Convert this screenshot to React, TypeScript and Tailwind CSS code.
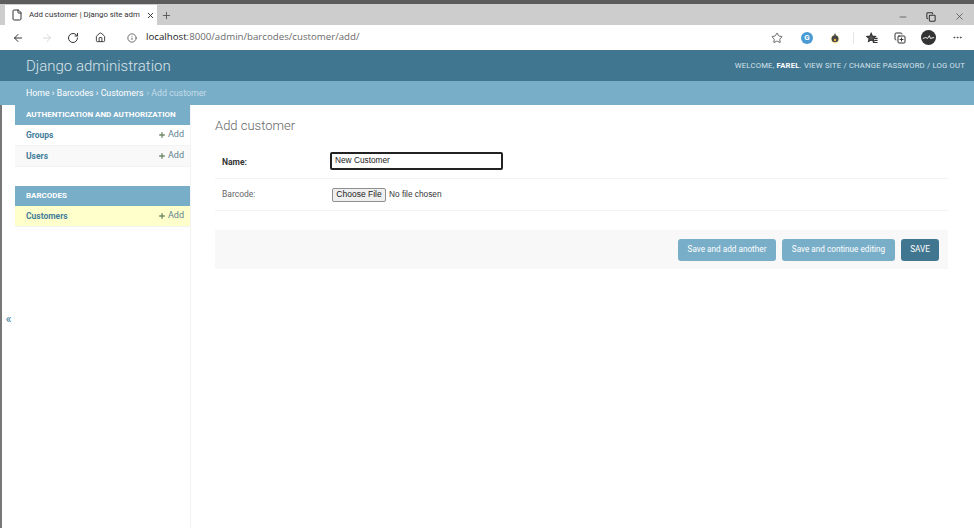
import { ArrowLeft, ArrowRight, RotateCw, Home, Info, Star, Plus, X, Minus, Copy, CopyPlus, File, MoreHorizontal } from 'lucide-react';

function AddLink() {
  return (
    <span className="flex items-center gap-[2px] text-[9px] text-[#5f7f90]">
      <Plus className="h-[8px] w-[8px] text-[#6f8a68]" strokeWidth={4} />
      Add
    </span>
  );
}

function ModelRow({ name, active, alt }: { name: string; active?: boolean; alt?: boolean }) {
  return (
    <div
      className={`flex h-[21px] items-center justify-between pl-[11px] pr-[6px] border-b border-[#f3f3f3] ${
        active ? 'bg-[#ffffcc]' : alt ? 'bg-[#f9f9f9]' : 'bg-white'
      }`}
    >
      <span className="text-[8.5px] font-bold text-[#447e9b]">{name}</span>
      <AddLink />
    </div>
  );
}

function AppHeading({ children }: { children: string }) {
  return (
    <div className="flex h-[20px] items-center bg-[#79aec8] pl-[11px] text-[8px] font-bold text-white">
      {children}
    </div>
  );
}

// Favourites button of the browser: star with list lines
function FavoritesIcon() {
  return (
    <svg viewBox="0 0 14 14" className="mr-[16px] h-[12px] w-[12px]" fill="none" stroke="#333" strokeWidth="1.3">
      <path d="M6 1.5l1.5 3.3 3.5.4-2.6 2.4.7 3.5L6 9.4l-3.1 1.7.7-3.5L1 5.2l3.5-.4z" fill="#555" />
      <path d="M9.5 7.5h4M9.5 9.8h4M8 12.2h5.5" />
    </svg>
  );
}

function FlameIcon() {
  return (
    <svg viewBox="0 0 12 14" className="mr-[13px] h-[12px] w-[10px]">
      <circle cx="6" cy="8.5" r="5.5" fill="#fff7c4" />
      <circle cx="6" cy="8" r="4.2" fill="#444" />
      <path d="M6 1l1.4 3H4.6z" fill="#444" />
      <circle cx="6" cy="9.5" r="1.5" fill="#e8b23a" />
    </svg>
  );
}

function AvatarIcon() {
  return (
    <svg viewBox="0 0 16 16" className="mr-[16px] h-[15px] w-[15px]">
      <circle cx="8" cy="8" r="8" fill="#333" />
      <path d="M2 9l3-1 2 1 2-3 1 3 4-1" fill="none" stroke="#fff" strokeWidth="1" />
    </svg>
  );
}

export default function App() {
  return (
    <div className="flex h-[528px] w-[974px] flex-col overflow-hidden bg-white font-['Roboto',sans-serif]">
      {/* Browser chrome */}
      <div className="h-[4px] shrink-0 bg-[#5c5c5c]" />
      <div className="flex h-[21px] shrink-0 items-end bg-[#cdcdcd]">
        <div className="ml-[5px] flex h-[20px] w-[152px] items-center gap-[6px] bg-white pl-[6px] pr-[6px]">
          <File className="h-[12px] w-[12px] shrink-0 text-[#333]" strokeWidth={2} />
          <span className="flex-1 whitespace-nowrap text-[7.8px] text-[#333]">
            Add customer | Django site adm
          </span>
          <X className="h-[9px] w-[9px] shrink-0 text-[#333]" strokeWidth={2.5} />
        </div>
        <Plus className="mb-[4px] ml-[4px] h-[11px] w-[11px] text-[#555]" />
        <div className="ml-auto mb-[3px] flex items-center gap-[18px] pr-[9px]">
          <Minus className="h-[10px] w-[10px] text-[#555]" />
          <Copy className="h-[10px] w-[10px] text-[#333]" strokeWidth={2.5} />
          <X className="h-[11px] w-[11px] text-[#444]" strokeWidth={1.5} />
        </div>
      </div>
      <div className="flex h-[25px] shrink-0 items-center bg-white">
        <ArrowLeft className="ml-[12px] h-[12px] w-[12px] text-[#333]" />
        <ArrowRight className="ml-[17px] h-[12px] w-[12px] text-[#d8d8d8]" />
        <RotateCw className="ml-[14px] h-[12px] w-[12px] text-[#333]" />
        <Home className="ml-[16px] h-[11px] w-[11px] text-[#333]" />
        <Info className="ml-[21px] h-[10px] w-[10px] text-[#555]" />
        <span className="ml-[9px] font-['Open_Sans',sans-serif] text-[9.7px] text-[#6b6b6b]">
          <span className="text-[#222]">localhost</span>:8000/admin/barcodes/customer/add/
        </span>
        <div className="ml-auto flex items-center pr-[11px]">
          <Star className="mr-[18px] h-[12px] w-[12px] text-[#666]" />
          <span className="mr-[17px] flex h-[12px] w-[12px] items-center justify-center rounded-full bg-[#4a9bd4] text-[8px] font-bold text-white">
            G
          </span>
          <FlameIcon />
          <span className="mr-[12px] h-[12px] w-px bg-[#e6e6e6]" />
          <FavoritesIcon />
          <CopyPlus className="mr-[15px] h-[12px] w-[12px] text-[#333]" />
          <AvatarIcon />
          <MoreHorizontal className="h-[11px] w-[11px] text-[#444]" />
        </div>
      </div>

      {/* Django header */}
      <div className="flex h-[31px] shrink-0 items-center justify-between bg-[#417690] pl-[26px] pr-[9px]">
        <span className="pt-[2px] text-[15px] font-light text-[#d9e4e9]">Django administration</span>
        <span className="pt-[1px] text-[7.7px] tracking-[0.2px] text-[#d5e4ec]">
          WELCOME, <b className="text-white">FAREL</b>. VIEW SITE / CHANGE PASSWORD / LOG OUT
        </span>
      </div>
      <div className="flex h-[24px] shrink-0 items-center bg-[#79aec8] pl-[26px] pt-[1px] text-[8.8px] text-white">
        Home › Barcodes › Customers <span className="ml-[3px] text-[#c4dce8]">› Add customer</span>
      </div>

      {/* Main */}
      <div className="flex flex-1 min-h-0">
        <div className="flex w-[15px] shrink-0 items-center justify-center border-l-2 border-[#777] pt-[4px]">
          <span className="text-[13px] text-[#447e9b]">«</span>
        </div>
        <div className="w-[176px] shrink-0 border-r border-[#f3f3f3]">
          <AppHeading>AUTHENTICATION AND AUTHORIZATION</AppHeading>
          <ModelRow name="Groups" />
          <ModelRow name="Users" alt />
          <div className="h-[19px]" />
          <AppHeading>BARCODES</AppHeading>
          <ModelRow name="Customers" active />
        </div>
        <div className="flex-1 pl-[24px] pr-[26px] pt-[13px]">
          <h1 className="text-[13px] font-light leading-[16px] text-[#666]">Add customer</h1>
          <div className="mt-[9px] flex h-[36px] items-center border-b border-[#f3f3f3] pl-[7px]">
            <label className="w-[108px] pt-[3px] text-[8.5px] font-bold text-[#333]">Name:</label>
            <div className="flex h-[18px] w-[173px] items-center rounded-[2px] border-2 border-[#222] pl-[3px] font-['Liberation_Sans',sans-serif] text-[8.3px] text-[#222]">
              New Customer
            </div>
          </div>
          <div className="flex h-[32px] items-center border-b border-[#f3f3f3] pl-[7px]">
            <label className="w-[110px] text-[8.5px] text-[#666]">Barcode:</label>
            <div className="flex h-[14px] w-[54px] items-center justify-center rounded-[2px] border border-[#8f8f8f] bg-[#efefef] font-['Liberation_Sans',sans-serif] text-[8.5px] text-[#222]">
              Choose File
            </div>
            <span className="ml-[3px] font-['Liberation_Sans',sans-serif] text-[8.3px] text-[#333]">No file chosen</span>
          </div>
          <div className="mt-[19px] flex h-[39px] items-center justify-end gap-[6px] bg-[#f8f8f8] pr-[9px] text-white">
            <div className="flex h-[22px] w-[98px] items-center justify-center rounded-[3px] bg-[#79aec8] text-[8.2px]">
              Save and add another
            </div>
            <div className="flex h-[22px] w-[113px] items-center justify-center rounded-[3px] bg-[#79aec8] text-[8.2px]">
              Save and continue editing
            </div>
            <div className="flex h-[22px] w-[38px] items-center justify-center rounded-[3px] bg-[#417690] text-[8.2px]">
              SAVE
            </div>
          </div>
        </div>
      </div>
    </div>
  );
}
